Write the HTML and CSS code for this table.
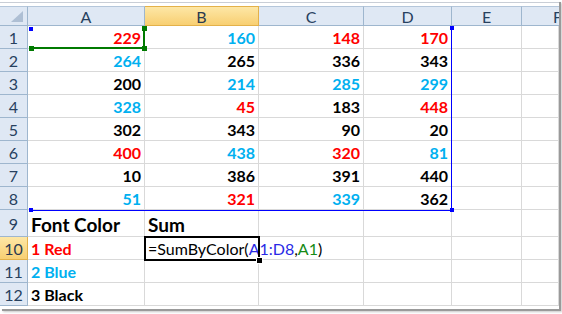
FILE: index.html
```html
<!DOCTYPE html>
<html lang="en">
  <head>
    <meta charset="UTF-8" />
    <title>SumByColor</title>
    <link rel="stylesheet" href="styles.css">
  </head>
  <body>
    <div class="window">
      <div class="topbar"></div>

      <div class="sheet">
        <!-- column headers -->
        <div class="hdr corner"><span class="tri"></span></div>
        <div class="hdr">A</div>
        <div class="hdr active">B</div>
        <div class="hdr">C</div>
        <div class="hdr">D</div>
        <div class="hdr">E</div>
        <div class="hdr cut">F</div>

        <div class="rh">1</div>
        <div class="c red">229</div><div class="c blue">160</div><div class="c red">148</div><div class="c red">170</div><div class="c"></div><div class="c"></div>
        <div class="rh">2</div>
        <div class="c blue">264</div><div class="c">265</div><div class="c">336</div><div class="c">343</div><div class="c"></div><div class="c"></div>
        <div class="rh">3</div>
        <div class="c">200</div><div class="c blue">214</div><div class="c blue">285</div><div class="c blue">299</div><div class="c"></div><div class="c"></div>
        <div class="rh">4</div>
        <div class="c blue">328</div><div class="c red">45</div><div class="c">183</div><div class="c red">448</div><div class="c"></div><div class="c"></div>
        <div class="rh">5</div>
        <div class="c">302</div><div class="c">343</div><div class="c">90</div><div class="c">20</div><div class="c"></div><div class="c"></div>
        <div class="rh">6</div>
        <div class="c red">400</div><div class="c blue">438</div><div class="c red">320</div><div class="c blue">81</div><div class="c"></div><div class="c"></div>
        <div class="rh">7</div>
        <div class="c">10</div><div class="c">386</div><div class="c">391</div><div class="c">440</div><div class="c"></div><div class="c"></div>
        <div class="rh">8</div>
        <div class="c blue">51</div><div class="c red">321</div><div class="c blue">339</div><div class="c">362</div><div class="c"></div><div class="c"></div>

        <div class="rh">9</div>
        <div class="c title">Font Color</div><div class="c title">Sum</div><div class="c"></div><div class="c"></div><div class="c"></div><div class="c"></div>
        <div class="rh active">10</div>
        <div class="c label red">1 Red</div>
        <div class="c formula">=SumByColor(<span class="ref-blue">A1:D8</span>,<span class="ref-green">A1</span>)</div>
        <div class="c"></div><div class="c"></div><div class="c"></div><div class="c"></div>
        <div class="rh">11</div>
        <div class="c label blue">2 Blue</div><div class="c"></div><div class="c"></div><div class="c"></div><div class="c"></div><div class="c"></div>
        <div class="rh">12</div>
        <div class="c label">3 Black</div><div class="c"></div><div class="c"></div><div class="c"></div><div class="c"></div><div class="c"></div>

        <!-- reference highlights drawn over the grid -->
        <div class="range-blue"></div>
        <span class="knob blue-knob" style="left: 29px; top: 21px"></span>
        <span class="knob blue-knob" style="left: 450px; top: 20px"></span>
        <span class="knob blue-knob" style="left: 29px; top: 202px"></span>
        <span class="knob blue-knob" style="left: 450px; top: 202px"></span>

        <div class="range-green"></div>
        <span class="knob green-knob" style="left: 142px; top: 20px"></span>
        <span class="knob green-knob" style="left: 29px; top: 40px"></span>
        <span class="knob green-knob" style="left: 142px; top: 40px"></span>

        <div class="active-cell"><span class="fill-handle"></span></div>
      </div>
    </div>
  </body>
</html>
```

FILE: styles.css
```css
:root {
  --grid-line: #d9d9d9;
  --header-bg: #dfe8f4;
  --header-line: #9eb6ce;
  --header-text: #27415f;
  --red: #ff0000;
  --blue: #00b0f0;
}

body {
  margin: 0;
  width: 562px;
  height: 314px;
  overflow: hidden;
  background: #ffffff;
  font-family: "Lato", "Open Sans", sans-serif;
}

.window {
  width: 559px;
  height: 309px;
  overflow: hidden;
  box-shadow: 2px 2px 0 #9a9a9a, 3px 3px 2px #c8c8c8;
}

.topbar {
  height: 2px;
  border-bottom: 1px solid #c9ced6;
  margin-bottom: 3px;
}

/* Grid of the sheet */
.sheet {
  position: relative;
  display: grid;
  grid-template-columns: 28px 117px 114px 105px 88px 70px 1fr;
  grid-template-rows: 20px repeat(8, 23px) 27px repeat(3, 23px);
}

.hdr {
  display: flex;
  align-items: center;
  justify-content: center;
  box-sizing: border-box;
  background: var(--header-bg);
  border-top: 1px solid #b4c6da;
  border-right: 1px solid var(--header-line);
  border-bottom: 1px solid var(--header-line);
  color: var(--header-text);
  font-size: 16px;
}

.hdr.cut {
  justify-content: flex-start;
  border-right: none;
  padding-left: 31px;
  overflow: hidden;
}

.corner {
  position: relative;
}

.tri {
  position: absolute;
  right: 4px;
  bottom: 3px;
  width: 0;
  height: 0;
  border-left: 12px solid transparent;
  border-bottom: 11px solid #aebfd4;
}

.rh {
  display: flex;
  align-items: center;
  justify-content: center;
  box-sizing: border-box;
  background: var(--header-bg);
  border-right: 1px solid var(--header-line);
  border-bottom: 1px solid var(--header-line);
  color: var(--header-text);
  font-size: 16px;
}

.hdr.active,
.rh.active {
  background: linear-gradient(#fde7a6, #f8cf72);
  border-color: #e3b14a;
  color: #2b3a4f;
}

.c {
  display: flex;
  align-items: center;
  justify-content: flex-end;
  box-sizing: border-box;
  padding: 1px 3px 0 3px;
  border-right: 1px solid var(--grid-line);
  border-bottom: 1px solid var(--grid-line);
  font-size: 16px;
  font-weight: bold;
  color: #000000;
  white-space: nowrap;
}

.c.red {
  color: var(--red);
}

.c.blue {
  color: var(--blue);
}

.c.title {
  justify-content: flex-start;
  font-size: 19px;
  padding-top: 3px;
}

.c.label {
  justify-content: flex-start;
}

.c.formula {
  justify-content: flex-start;
  font-weight: normal;
  font-size: 16px;
  overflow: visible;
  position: relative;
  z-index: 1;
}

.ref-blue {
  color: #2929e6;
}

.ref-green {
  color: #168a16;
}

/* Highlights */
.range-blue {
  position: absolute;
  left: 29px;
  top: 20px;
  width: 423px;
  height: 185px;
  border-right: 1px solid #0000ff;
  border-bottom: 1px solid #0000ff;
  box-sizing: border-box;
  pointer-events: none;
}

.range-green {
  position: absolute;
  left: 29px;
  top: 20px;
  width: 116px;
  height: 23px;
  border-right: 2px solid #007a00;
  border-bottom: 2px solid #007a00;
  box-sizing: border-box;
}

.knob {
  position: absolute;
  width: 4px;
  height: 4px;
}

.blue-knob {
  background: #0000ff;
}

.green-knob {
  width: 5px;
  height: 5px;
  background: #007a00;
}

.active-cell {
  position: absolute;
  left: 144px;
  top: 230px;
  width: 116px;
  height: 25px;
  border: 2px solid #000000;
  box-sizing: border-box;
  z-index: 2;
}

.fill-handle {
  position: absolute;
  right: -5px;
  bottom: -5px;
  width: 5px;
  height: 5px;
  background: #000000;
  border: 1px solid #ffffff;
}
```
